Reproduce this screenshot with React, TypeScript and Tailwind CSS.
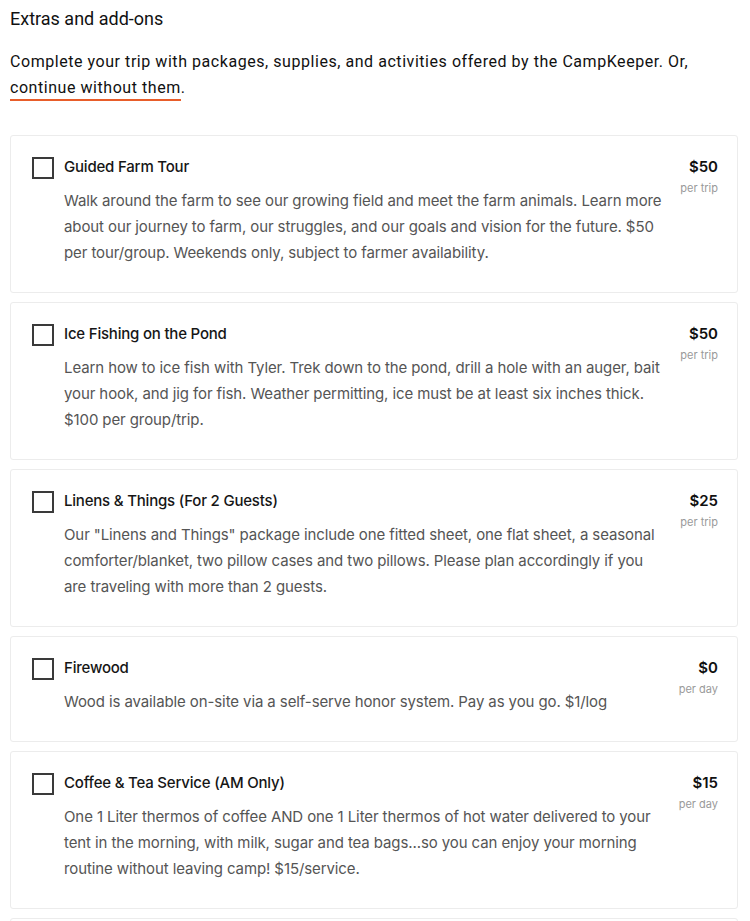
import React from 'react';

type Extra = {
  title: string;
  description: string;
  price: string;
  unit: string;
};

const extras: Extra[] = [
  {
    title: 'Guided Farm Tour',
    description:
      'Walk around the farm to see our growing field and meet the farm animals. Learn more about our journey to farm, our struggles, and our goals and vision for the future. $50 per tour/group. Weekends only, subject to farmer availability.',
    price: '$50',
    unit: 'per trip',
  },
  {
    title: 'Ice Fishing on the Pond',
    description:
      'Learn how to ice fish with Tyler. Trek down to the pond, drill a hole with an auger, bait your hook, and jig for fish. Weather permitting, ice must be at least six inches thick. $100 per group/trip.',
    price: '$50',
    unit: 'per trip',
  },
  {
    title: 'Linens & Things (For 2 Guests)',
    description:
      'Our "Linens and Things" package include one fitted sheet, one flat sheet, a seasonal comforter/blanket, two pillow cases and two pillows. Please plan accordingly if you are traveling with more than 2 guests.',
    price: '$25',
    unit: 'per trip',
  },
  {
    title: 'Firewood',
    description: 'Wood is available on-site via a self-serve honor system. Pay as you go. $1/log',
    price: '$0',
    unit: 'per day',
  },
  {
    title: 'Coffee & Tea Service (AM Only)',
    description:
      'One 1 Liter thermos of coffee AND one 1 Liter thermos of hot water delivered to your tent in the morning, with milk, sugar and tea bags...so you can enjoy your morning routine without leaving camp! $15/service.',
    price: '$15',
    unit: 'per day',
  },
  {
    title: 'S’mores Kit',
    description: 'Graham crackers, marshmallows and chocolate for the fire pit.',
    price: '$10',
    unit: 'per trip',
  },
];

function ExtraCard({ item }: { item: Extra }) {
  return (
    <label className="flex items-start rounded-[3px] border border-[#ececec] bg-white pl-[21px] pr-[19px] pt-5 pb-[26px]">
      <span className="mt-px h-[22px] w-[22px] shrink-0 border-2 border-[#3a3a3a] bg-white" />
      <div className="ml-[10px] flex-1">
        <div className="text-[15px] font-medium leading-[22px] tracking-[-0.2px] text-[#161616]">
          {item.title}
        </div>
        <p className="mt-[10px] text-[15px] leading-[26px] tracking-[-0.1px] text-[#555]">
          {item.description}
        </p>
      </div>
      <div className="shrink-0 pl-3 text-right">
        <div className="text-[15px] font-semibold leading-[22px] text-[#111]">{item.price}</div>
        <div className="mt-[2px] text-[11px] leading-[16px] text-[#9a9a9a]">{item.unit}</div>
      </div>
    </label>
  );
}

export default function App() {
  return (
    <div className="min-h-screen bg-white pl-[10px] pr-[12px] pt-[7px] pb-8 font-['Inter',sans-serif]">
      <h2 className="font-['Roboto',sans-serif] text-[18px] font-normal leading-[24px] text-[#111]">
        Extras and add-ons
      </h2>
      <p className="mt-[18px] font-['Roboto',sans-serif] text-[16px] leading-[26px] tracking-[0.55px] text-[#111]">
        Complete your trip with packages, supplies, and activities offered by the CampKeeper. Or,{' '}
        <a href="#" className="border-b-2 border-[#e85d2a] pb-[2px]">
          continue without them
        </a>
        .
      </p>
      <div className="mt-[34px] flex flex-col gap-[9px]">
        {extras.map((item) => (
          <ExtraCard key={item.title} item={item} />
        ))}
      </div>
    </div>
  );
}
